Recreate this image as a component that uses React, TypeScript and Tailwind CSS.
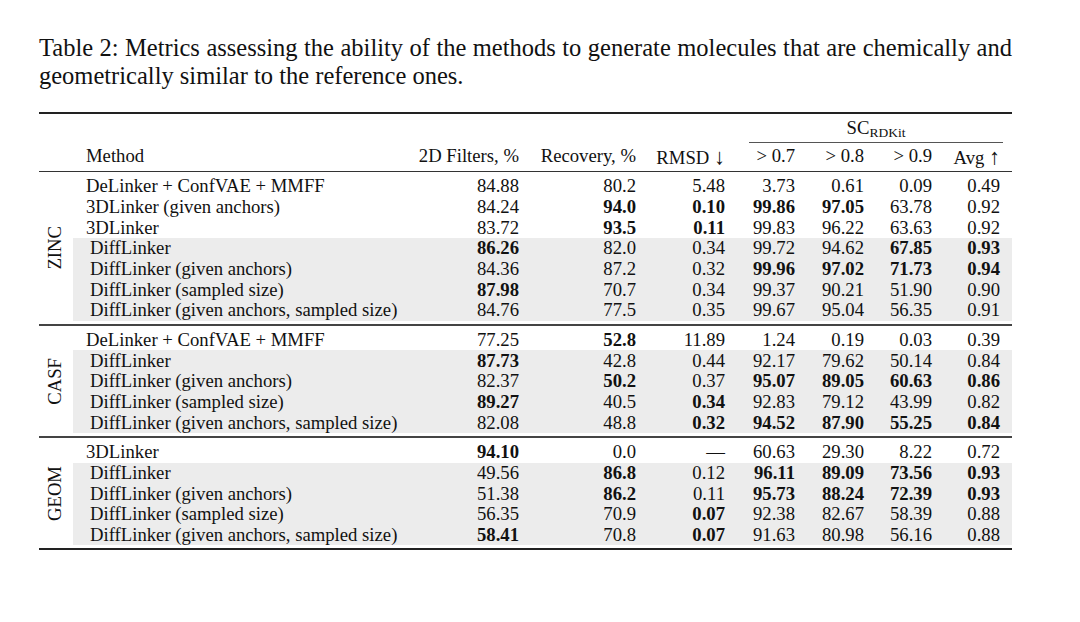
type Cell = { v: string; b: boolean };
type Row = { name: string; shade?: boolean; cells: Cell[] };
type Group = { label: string; rows: Row[] };

// "*" in front of a value marks it bold
function cells(s: string): Cell[] {
  return s.split(" ").map((t) =>
    t.startsWith("*") ? { v: t.slice(1), b: true } : { v: t, b: false }
  );
}

const groups: Group[] = [
  {
    label: "ZINC",
    rows: [
      { name: "DeLinker + ConfVAE + MMFF", cells: cells("84.88 80.2 5.48 3.73 0.61 0.09 0.49") },
      { name: "3DLinker (given anchors)", cells: cells("84.24 *94.0 *0.10 *99.86 *97.05 63.78 0.92") },
      { name: "3DLinker", cells: cells("83.72 *93.5 *0.11 99.83 96.22 63.63 0.92") },
      { name: "DiffLinker", shade: true, cells: cells("*86.26 82.0 0.34 99.72 94.62 *67.85 *0.93") },
      { name: "DiffLinker (given anchors)", shade: true, cells: cells("84.36 87.2 0.32 *99.96 *97.02 *71.73 *0.94") },
      { name: "DiffLinker (sampled size)", shade: true, cells: cells("*87.98 70.7 0.34 99.37 90.21 51.90 0.90") },
      { name: "DiffLinker (given anchors, sampled size)", shade: true, cells: cells("84.76 77.5 0.35 99.67 95.04 56.35 0.91") },
    ],
  },
  {
    label: "CASF",
    rows: [
      { name: "DeLinker + ConfVAE + MMFF", cells: cells("77.25 *52.8 11.89 1.24 0.19 0.03 0.39") },
      { name: "DiffLinker", shade: true, cells: cells("*87.73 42.8 0.44 92.17 79.62 50.14 0.84") },
      { name: "DiffLinker (given anchors)", shade: true, cells: cells("82.37 *50.2 0.37 *95.07 *89.05 *60.63 *0.86") },
      { name: "DiffLinker (sampled size)", shade: true, cells: cells("*89.27 40.5 *0.34 92.83 79.12 43.99 0.82") },
      { name: "DiffLinker (given anchors, sampled size)", shade: true, cells: cells("82.08 48.8 *0.32 *94.52 *87.90 *55.25 *0.84") },
    ],
  },
  {
    label: "GEOM",
    rows: [
      { name: "3DLinker", cells: cells("*94.10 0.0 — 60.63 29.30 8.22 0.72") },
      { name: "DiffLinker", shade: true, cells: cells("49.56 *86.8 0.12 *96.11 *89.09 *73.56 *0.93") },
      { name: "DiffLinker (given anchors)", shade: true, cells: cells("51.38 *86.2 0.11 *95.73 *88.24 *72.39 *0.93") },
      { name: "DiffLinker (sampled size)", shade: true, cells: cells("56.35 70.9 *0.07 92.38 82.67 58.39 0.88") },
      { name: "DiffLinker (given anchors, sampled size)", shade: true, cells: cells("*58.41 70.8 *0.07 91.63 80.98 56.16 0.88") },
    ],
  },
];

const cols = "grid grid-cols-[327px_119px_117px_89px_70px_69px_68px_68px_12px]";

function DataRow({ row }: { row: Row }) {
  return (
    <div className={`${cols} h-[20.67px] items-center ${row.shade ? "bg-[#ececec]" : ""}`}>
      <div className={row.shade ? "pl-[17px]" : "pl-[13px]"}>{row.name}</div>
      {row.cells.map((c, i) => (
        <div key={i} className={`text-right ${c.b ? "font-bold" : ""}`}>
          {c.v}
        </div>
      ))}
      <div />
    </div>
  );
}

function GroupBlock({ group }: { group: Group }) {
  return (
    <div className="flex pt-[4px] pb-[3px]">
      <div className="flex w-[34px] items-center justify-center">
        <span className="rotate-180 [writing-mode:vertical-rl] pl-[2px]">{group.label}</span>
      </div>
      <div className="flex-1">
        {group.rows.map((r, i) => (
          <DataRow key={i} row={r} />
        ))}
      </div>
    </div>
  );
}

export default function App() {
  return (
    <div className="min-h-[622px] w-[1080px] bg-white pl-[39px] pt-[34px] text-[#111] [font-family:'Liberation_Serif','Times_New_Roman',serif]">
      <div className="w-[973px] text-[24.5px] leading-[28px]">
        <p className="text-justify [text-align-last:justify]">
          Table 2: Metrics assessing the ability of the methods to generate molecules that are chemically and
        </p>
        <p>geometrically similar to the reference ones.</p>
      </div>

      <div className="mt-[22px] w-[973px] text-[18.7px] leading-[20px]">
        <div className="h-[2px] bg-[#222]" />

        <div className="flex h-[28px] items-center">
          <div className="ml-[710px] w-[254px] text-center">
            SC<sub className="text-[13.5px] leading-none">RDKit</sub>
          </div>
        </div>
        <div className="ml-[710px] h-[1px] w-[254px] bg-[#555]" />

        <div className="flex h-[28px] items-center">
          <div className="w-[34px]" />
          <div className={`${cols} flex-1`}>
            <div className="pl-[13px]">Method</div>
            <div className="text-right">2D Filters, %</div>
            <div className="text-right">Recovery, %</div>
            <div className="text-right">
              RMSD <span className="text-[22px] leading-none">↓</span>
            </div>
            <div className="text-right">&gt; 0.7</div>
            <div className="text-right">&gt; 0.8</div>
            <div className="text-right">&gt; 0.9</div>
            <div className="text-right">
              Avg <span className="text-[22px] leading-none">↑</span>
            </div>
            <div />
          </div>
        </div>
        <div className="h-[1px] bg-[#333]" />

        <GroupBlock group={groups[0]} />
        <div className="h-[2px] bg-[#444]" />
        <GroupBlock group={groups[1]} />
        <div className="h-[2px] bg-[#444]" />
        <GroupBlock group={groups[2]} />
        <div className="h-[2px] bg-[#222]" />
      </div>
    </div>
  );
}
